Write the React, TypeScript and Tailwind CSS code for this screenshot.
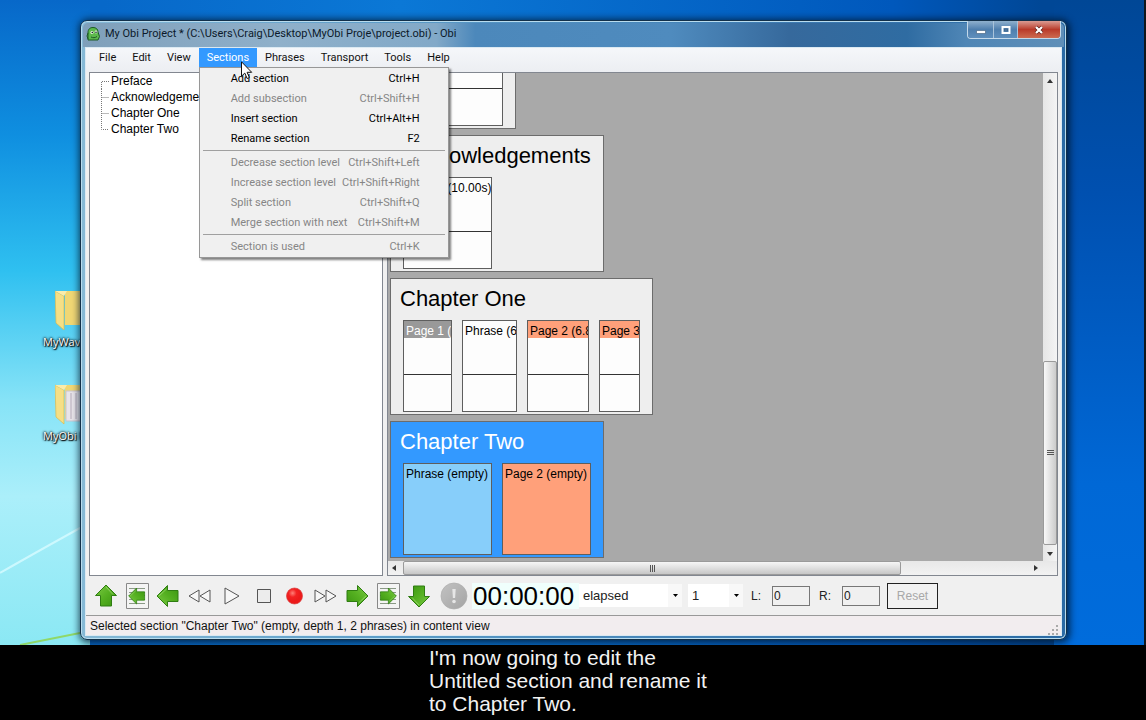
import type { ReactNode } from 'react';

type MenuEntry = { label: string; keys: string; enabled?: boolean } | null;

const sectionMenu: MenuEntry[] = [
  { label: 'Add section', keys: 'Ctrl+H', enabled: true },
  { label: 'Add subsection', keys: 'Ctrl+Shift+H' },
  { label: 'Insert section', keys: 'Ctrl+Alt+H', enabled: true },
  { label: 'Rename section', keys: 'F2', enabled: true },
  null,
  { label: 'Decrease section level', keys: 'Ctrl+Shift+Left' },
  { label: 'Increase section level', keys: 'Ctrl+Shift+Right' },
  { label: 'Split section', keys: 'Ctrl+Shift+Q' },
  { label: 'Merge section with next', keys: 'Ctrl+Shift+M' },
  null,
  { label: 'Section is used', keys: 'Ctrl+K' },
];

function DropMenu() {
  return (
    <div className="absolute left-0 top-full z-20 w-[250px] border border-[#979797] bg-[#f0f0f0] pb-px shadow-[2px_2px_2px_rgba(0,0,0,0.5)]">
      {sectionMenu.map((m, i) =>
        m ? (
          <button
            key={i}
            disabled={!m.enabled}
            className="flex h-5 w-full items-center justify-between pr-7 pl-[31px] text-black disabled:text-[#868686]"
          >
            <span>{m.label}</span>
            <span>{m.keys}</span>
          </button>
        ) : (
          <div key={i} className="flex h-1 items-center px-[3px]">
            <div className="h-px w-full bg-[#a0a0a0]" />
          </div>
        ),
      )}
    </div>
  );
}

function Pointer() {
  return (
    <svg className="pointer-events-none absolute top-[13px] left-[42px] z-30 h-[19px] w-[12px]" viewBox="0 0 12 19">
      <path d="M.5.8v14.4l3.3-3.1 2.3 5.4 2.3-1-2.3-5.2h4.6z" fill="#fff" stroke="#111" />
    </svg>
  );
}

function MenuBar() {
  return (
    <nav className="flex h-[24px] shrink-0 items-start bg-gradient-to-b from-[#f5f7fa] to-[#eceef2] pl-[5px] font-['Roboto',sans-serif] text-[11px] leading-none text-[#111]">
      {['File', 'Edit', 'View', 'Sections', 'Phrases', 'Transport', 'Tools', 'Help'].map((name) =>
        name === 'Sections' ? (
          <div key={name} className="relative">
            <button className="h-[19px] bg-[#3399ff] px-2 text-white">{name}</button>
            <DropMenu />
            <Pointer />
          </div>
        ) : (
          <button key={name} className="h-[19px] px-2">
            {name}
          </button>
        ),
      )}
    </nav>
  );
}

function TitleBar() {
  return (
    <header className="flex h-[27px] shrink-0 items-start justify-between">
      <div className="flex items-center gap-[3px] pt-[5px]">
        <svg className="h-4 w-4" viewBox="0 0 16 16">
          <path d="M2 14V7c0-4 2-5.500 5-5.500S12 3 12 6l1.500 4.500L12 14z" fill="#5cb94c" stroke="#1d5b25" />
          <path d="M2 7l-1 3 1 3" fill="none" stroke="#1d5b25" />
          <circle cx="6" cy="6.500" r="1.600" fill="#e9f7d8" />
          <circle cx="10" cy="6" r="1.400" fill="#e9f7d8" />
          <circle cx="6.300" cy="6.500" r=".8" fill="#123" />
          <circle cx="10" cy="6.200" r=".8" fill="#123" />
          <path d="M5 11c2 1 4 1 6-.5" fill="none" stroke="#1d5b25" />
        </svg>
        <h1 className="font-['Roboto',sans-serif] text-[11px] leading-4 text-[#0c1a2a]">
          My Obi Project * (C:\Users\Craig\Desktop\MyObi Proje\project.obi) - Obi
        </h1>
      </div>
      <div className="flex h-[18px] overflow-hidden rounded-b-[4px] border border-t-0 border-[#c4d9ea]">
        <button aria-label="Minimize" className="flex w-[26px] items-center justify-center border-r border-[#a9c3da] bg-gradient-to-b from-[#8fb0cd] via-[#4f7fae] to-[#5f8fbc]">
          <svg className="h-3 w-3" viewBox="0 0 12 12"><path d="M1.500 6.500h9v3h-9z" fill="#fff" stroke="#3c5a78" strokeWidth=".6" /></svg>
        </button>
        <button aria-label="Maximize" className="flex w-[24px] items-center justify-center border-r border-[#a9c3da] bg-gradient-to-b from-[#8fb0cd] via-[#4f7fae] to-[#5f8fbc]">
          <svg className="h-3 w-3" viewBox="0 0 12 12"><path d="M2.500 3h7v6h-7z" fill="none" stroke="#fff" strokeWidth="2" /><path d="M4.500 5h3v2h-3z" fill="none" stroke="#3c5a78" strokeWidth=".6" /></svg>
        </button>
        <button aria-label="Close" className="flex w-[42px] items-center justify-center bg-gradient-to-b from-[#d99a92] via-[#b93a2a] to-[#cc6a50]">
          <svg className="h-3 w-3" viewBox="0 0 12 12"><path d="M3 3l6 6M9 3L3 9" stroke="#5a1a14" strokeWidth="3.500" /><path d="M3 3l6 6M9 3L3 9" stroke="#fff" strokeWidth="2.300" /></svg>
        </button>
      </div>
    </header>
  );
}

function Tree() {
  return (
    <aside className="w-[294px] shrink-0 overflow-hidden border border-[#828790] bg-white pl-[11px] text-[12px] leading-4 text-black">
      <ul>
        {['Preface', 'Acknowledgements', 'Chapter One', 'Chapter Two'].map((t, i) => (
          <li key={t} className="flex h-4 gap-[2px]">
            <svg className="h-4 w-[8px] shrink-0" viewBox="0 0 8 16">
              <path
                d={i === 0 ? 'M.5 16V8.500H8' : i === 3 ? 'M.5 0V8.500H8' : 'M.5 0V16M.5 8.500H8'}
                fill="none"
                stroke="#777"
                strokeDasharray="1 1"
              />
            </svg>
            {t}
          </li>
        ))}
      </ul>
    </aside>
  );
}

function Block({ label, width, head = '', body = 'bg-[#fdfdfd]', empty = false }: { label: string; width: string; head?: string; body?: string; empty?: boolean }) {
  return (
    <div className={`flex h-[92px] flex-col overflow-hidden border border-[#5e5e5e] ${width} ${body}`}>
      <div className={`h-[17px] shrink-0 overflow-hidden pt-[2px] pl-[2px] text-[12px] leading-4 whitespace-nowrap ${head}`}>{label}</div>
      {!empty && <div className="h-[37px] border-b border-[#333]" />}
    </div>
  );
}

function Card({ title, selected = false, children }: { title: string; selected?: boolean; children: ReactNode }) {
  return (
    <section
      className={`flex h-[137px] shrink-0 flex-col border border-[#6c6c6c] pb-[2px] ${selected ? 'bg-[#3399ff] text-white' : 'bg-[#eeeeee] text-black'}`}
    >
      <h2 className="h-[41px] pr-3 pl-[9px] text-[22px] leading-[40px] whitespace-nowrap">{title}</h2>
      <div className="flex gap-[10px] px-3 text-black">{children}</div>
    </section>
  );
}

function ContentView() {
  return (
    <div className="flex min-w-0 flex-1 flex-col border border-[#828790]">
      <div className="flex min-h-0 flex-1">
        <main className="flex min-w-0 flex-1 flex-col items-start justify-end gap-[6px] overflow-hidden bg-[#a9a9a9] pb-[3px] pl-[2px]">
          <Card title="Preface">
            <Block label="Phrase (12.00s)" width="w-[100px]" />
          </Card>
          <Card title="Acknowledgements">
            <Block label="Phrase (10.00s)" width="w-[89px]" />
          </Card>
          <Card title="Chapter One">
            <Block label="Page 1 (7.20s)" width="w-[49px]" head="bg-[#999999] text-white" />
            <Block label="Phrase (6.10s)" width="w-[55px]" />
            <Block label="Page 2 (6.80s)" width="w-[62px]" head="bg-[#ffa07a]" />
            <Block label="Page 3 (5.00s)" width="w-[41px]" head="bg-[#ffa07a]" />
          </Card>
          <Card title="Chapter Two" selected>
            <Block label="Phrase (empty)" width="w-[89px]" body="bg-[#87cefa]" empty />
            <Block label="Page 2 (empty)" width="w-[89px]" body="bg-[#ffa07a]" empty />
          </Card>
        </main>
        <div className="flex w-[14px] shrink-0 flex-col bg-gradient-to-r from-[#e6e6e6] to-[#f4f4f4]">
          <svg className="h-[15px] w-[14px] shrink-0" viewBox="0 0 14 15"><path d="M4 10l3-4 3 4z" fill="#333" /></svg>
          <div className="grow-[274] basis-0" />
          <div className="flex grow-[183] basis-0 items-center justify-center rounded-[2px] border border-[#9a9a9a] bg-gradient-to-r from-[#f8f8f8] via-[#e2e2e2] to-[#cbcbcb]">
            <svg className="h-[7px] w-[7px]" viewBox="0 0 7 7"><path d="M0 1.500h7M0 3.500h7M0 5.500h7" stroke="#555" /></svg>
          </div>
          <svg className="h-[16px] w-[14px] shrink-0" viewBox="0 0 14 16"><path d="M4 7l3 4 3-4z" fill="#333" /></svg>
        </div>
      </div>
      <div className="flex h-[14px] shrink-0 bg-gradient-to-b from-[#e8e8e8] to-[#f2f2f2] pr-[14px]">
        <svg className="h-[14px] w-[15px] shrink-0" viewBox="0 0 15 14"><path d="M8 4L4 7l4 3z" fill="#333" /></svg>
        <div className="flex grow-[498] basis-0 items-center justify-center rounded-[2px] border border-[#9a9a9a] bg-gradient-to-b from-[#f6f6f6] via-[#dfdfdf] to-[#c6c6c6]">
          <svg className="h-[7px] w-[7px]" viewBox="0 0 7 7"><path d="M1.500 0v7M3.500 0v7M5.500 0v7" stroke="#555" /></svg>
        </div>
        <div className="grow-[127] basis-0" />
        <svg className="h-[14px] w-[15px] shrink-0" viewBox="0 0 15 14"><path d="M6 4l4 3-4 3z" fill="#333" /></svg>
      </div>
    </div>
  );
}

function Arrow({ turn, small = false }: { turn: number; small?: boolean }) {
  return (
    <g transform={`rotate(${turn} 13 13)${small ? ' translate(13 13) scale(.76) translate(-13 -13)' : ''}`}>
      <path d="M13 2l10.500 10.500h-5V23h-11V12.500h-5z" fill="url(#leaf)" stroke="#2f7d12" strokeLinejoin="round" />
      <path d="M13 4l7 7.500" fill="none" stroke="#b6e690" strokeWidth=".8" opacity=".7" />
    </g>
  );
}

const pageLines = <path d="M5 5.500h16M5 9.500h16M5 12.500h16M5 16.500h16M5 20.500h16" stroke="#8b9a86" />;

const toolIcons: { name: string; width: string; art: ReactNode; boxed?: boolean }[] = [
  { name: 'Previous section', width: 'w-[26px]', art: <Arrow turn={0} /> },
  {
    name: 'Previous page',
    width: 'w-[26px]',
    boxed: true,
    art: (
      <>
        {pageLines}
        <Arrow turn={270} small />
      </>
    ),
  },
  { name: 'Previous phrase', width: 'w-[26px]', art: <Arrow turn={270} /> },
  { name: 'Rewind', width: 'w-[27px]', art: <path d="M12 7L2 13l10 6zM23 7l-10 6 10 6z" fill="#f7f7f7" stroke="#555" /> },
  { name: 'Play', width: 'w-[27px]', art: <path d="M6 5l14 8-14 8z" fill="#f7f7f7" stroke="#555" /> },
  { name: 'Stop', width: 'w-[27px]', art: <path d="M6.500 6.500h13v13h-13z" fill="#ececec" stroke="#555" /> },
  { name: 'Record', width: 'w-[26px]', art: <circle cx="12.500" cy="13" r="8" fill="url(#rec)" stroke="#d84040" strokeWidth=".7" /> },
  { name: 'Fast forward', width: 'w-[26px]', art: <path d="M2 7l10 6-10 6zM13 7l10 6-10 6z" fill="#f7f7f7" stroke="#555" /> },
  { name: 'Next phrase', width: 'w-[26px]', art: <Arrow turn={90} /> },
  {
    name: 'Next page',
    width: 'w-[26px]',
    boxed: true,
    art: (
      <>
        {pageLines}
        <Arrow turn={90} small />
      </>
    ),
  },
  { name: 'Next section', width: 'w-[26px]', art: <Arrow turn={180} /> },
];

function Picker({ label, options, width }: { label: string; options: string[]; width: string }) {
  return (
    <div className={`relative h-[23px] ${width}`}>
      <select aria-label={label} className="h-full w-full appearance-none bg-white pl-1 text-[13px] text-[#222]">
        {options.map((o) => (
          <option key={o}>{o}</option>
        ))}
      </select>
      <div className="pointer-events-none absolute inset-y-0 right-0 flex w-[14px] items-center justify-center bg-[#f8f8f8]">
        <svg className="h-[3px] w-[5px]" viewBox="0 0 5 3"><path d="M0 0h5L2.500 3z" fill="#000" /></svg>
      </div>
    </div>
  );
}

function Toolbar() {
  return (
    <div className="flex h-[39px] shrink-0 items-center pl-[7px] text-[12px] text-[#222]">
      <svg className="absolute h-0 w-0" aria-hidden="true">
        <defs>
          <linearGradient id="leaf" x1="0" y1="0" x2="1" y2="1">
            <stop offset="0" stopColor="#7ccb45" />
            <stop offset=".5" stopColor="#55b021" />
            <stop offset="1" stopColor="#3a9410" />
          </linearGradient>
          <radialGradient id="rec" cx=".38" cy=".32">
            <stop offset="0" stopColor="#ff8078" />
            <stop offset=".5" stopColor="#f32222" />
            <stop offset="1" stopColor="#ec1a1a" />
          </radialGradient>
          <linearGradient id="ball" x1="0" y1="0" x2="1" y2="1">
            <stop offset="0" stopColor="#c2c2c2" />
            <stop offset="1" stopColor="#a4a4a4" />
          </linearGradient>
        </defs>
      </svg>
      <div className="flex items-center gap-[5px]">
        {toolIcons.map((t) => (
          <button key={t.name} aria-label={t.name} className={`flex h-[26px] items-center justify-center ${t.width}`}>
            <svg className="h-[26px] w-[26px] shrink-0" viewBox="0 0 26 26">
              {t.boxed && <path d="M2.500.5h22v25h-22z" fill="#f4f4f4" stroke="#888" />}
              {t.art}
            </svg>
          </button>
        ))}
      </div>
      <button aria-label="Mark as to-do" className="ml-2">
        <svg className="h-7 w-7" viewBox="0 0 28 28">
          <circle cx="14" cy="14" r="13" fill="url(#ball)" stroke="#adadad" strokeWidth=".7" />
          <path d="M12.300 7h3.400l-.6 9h-2.200z" fill="#e6e6e6" />
          <circle cx="14" cy="19.500" r="1.800" fill="#e6e6e6" />
        </svg>
      </button>
      <output className="ml-[4px] w-[107px] bg-[#f0fffc] pl-px text-[26px] leading-[26px] text-black">00:00:00</output>
      <div className="flex gap-[6px]">
        <Picker label="Time display" options={['elapsed', 'remaining']} width="w-[103px]" />
        <Picker label="Playback rate" options={['1', '1.5', '2']} width="w-[55px]" />
      </div>
      <label htmlFor="left" className="ml-2 w-[21px]">L:</label>
      <input id="left" defaultValue="0" className="h-[20px] w-[38px] border border-[#777] bg-[#f0f0f0] pl-px" />
      <label htmlFor="right" className="ml-[9px] w-[23px]">R:</label>
      <input id="right" defaultValue="0" className="h-[20px] w-[38px] border border-[#777] bg-[#f0f0f0] pl-px" />
      <button disabled className="ml-[7px] h-[26px] w-[51px] border border-[#222] bg-[#f2f2f2] text-[#a8a8a8]">Reset</button>
    </div>
  );
}

function DesktopFolder({ label, open = false }: { label: string; open?: boolean }) {
  return (
    <div className="w-[80px]">
      <svg className="ml-3 h-[42px] w-[44px]" viewBox="0 0 44 42">
        <path d="M10 1h32v34H10z" fill="#f0d774" />
        {open && <path d="M11 7h30v30H11z" fill="#e8e4ea" stroke="#c9c4cc" />}
        {open && <path d="M16 9v26M21 9v26" stroke="#cfc8d2" strokeWidth="2" />}
        <path d="M0 1l9 5v34L1 33z" fill="#f5df86" stroke="#dcba4c" strokeWidth=".7" />
        <path d="M0 1h12l-3 5z" fill="#fbecaa" />
      </svg>
      <div className="mt-[2px] font-['Open_Sans',sans-serif] text-[11px] leading-4 whitespace-nowrap text-white [text-shadow:1px_1px_1px_#000,0_0_2px_#000,0_0_3px_#000]">{label}</div>
    </div>
  );
}

export default function App() {
  return (
    <div className="flex h-screen flex-col overflow-hidden bg-black font-['Liberation_Sans',Arial,sans-serif]">
      <div className="relative flex min-h-0 flex-1 flex-col overflow-hidden border-r-2 border-[#10161c] bg-[linear-gradient(180deg,#0768c9_0%,#0f8fe0_21%,#2fc0f0_42%,#86e3f7_62%,#abeffa_77%,#8be8f4_100%),linear-gradient(180deg,#004796_0%,#0050b0_30%,#0068d6_75%,#006cdc_100%),linear-gradient(90deg,#0768c9_0%,#0768c9_9%,#0b78d6_35%,#0058bc_78%,#004796_91%)] bg-[length:90px_100%,90px_100%,100%_100%] bg-[position:left_top,right_top,left_top] bg-no-repeat pt-5 pr-[77px] pb-[5px] pl-20">
        <svg className="absolute bottom-0 left-0 h-[140px] w-[100px]" viewBox="0 0 100 140">
          <path d="M0 68Q40 45 100 12" fill="none" stroke="#d8fbff" strokeWidth="2" opacity=".8" />
          <path d="M20 140Q60 132 100 124" fill="none" stroke="#8fd868" strokeWidth="2" />
        </svg>
        <div className="absolute top-[290px] left-[43px] flex flex-col gap-[34px]">
          <DesktopFolder label="MyWaves" />
          <DesktopFolder label="MyObi Proje" open />
        </div>
        <div className="relative flex min-h-0 flex-1 flex-col rounded-[7px] border border-[#12304a] bg-[linear-gradient(90deg,#86b9d6_0%,#5c9cc8_30%,#3a78b0_75%,#2a6aa4_100%)] px-[5px] pb-[4px] shadow-[inset_0_0_0_1px_#b9dcee,1px_1px_7px_2px_rgba(0,20,40,0.75)]">
          <div className="absolute inset-x-[2px] top-[2px] h-[24px] rounded-t-[5px] bg-[linear-gradient(90deg,#7f9fba_0%,#8fb0ca_20%,#82a9c8_36%,#4c88bb_40%,#4f8bbe_60%,#36699c_72%,#2f6ca2_84%,#4f86b6_90%,#5f8fb8_100%)]" />
          <div className="relative flex min-h-0 flex-1 flex-col">
            <TitleBar />
            <div className="flex min-h-0 flex-1 flex-col bg-[#f0f0f0] shadow-[0_0_0_1px_#dbe9f2]">
              <MenuBar />
              <div className="flex min-h-0 flex-1 gap-1 px-[3px]">
                <Tree />
                <ContentView />
              </div>
              <Toolbar />
              <footer className="flex h-[20px] shrink-0 items-center justify-between border-t border-[#999] bg-[#f2edef] pr-[3px] pl-[4px] text-[12px] leading-4 text-[#111]">
                <span>Selected section "Chapter Two" (empty, depth 1, 2 phrases) in content view</span>
                <svg className="h-[10px] w-[10px] self-end" viewBox="0 0 10 10">
                  <path d="M8 0h2v2H8zM4 4h2v2H4zM8 4h2v2H8zM0 8h2v2H0zM4 8h2v2H4zM8 8h2v2H8z" fill="#aaa" />
                </svg>
              </footer>
            </div>
          </div>
        </div>
      </div>
      <div className="h-[75px] shrink-0 bg-black pt-px text-[21px] leading-[23px] text-[#f2f2f2]">
        <p className="mx-auto w-[288px]">I'm now going to edit the Untitled section and rename it to Chapter Two.</p>
      </div>
    </div>
  );
}
